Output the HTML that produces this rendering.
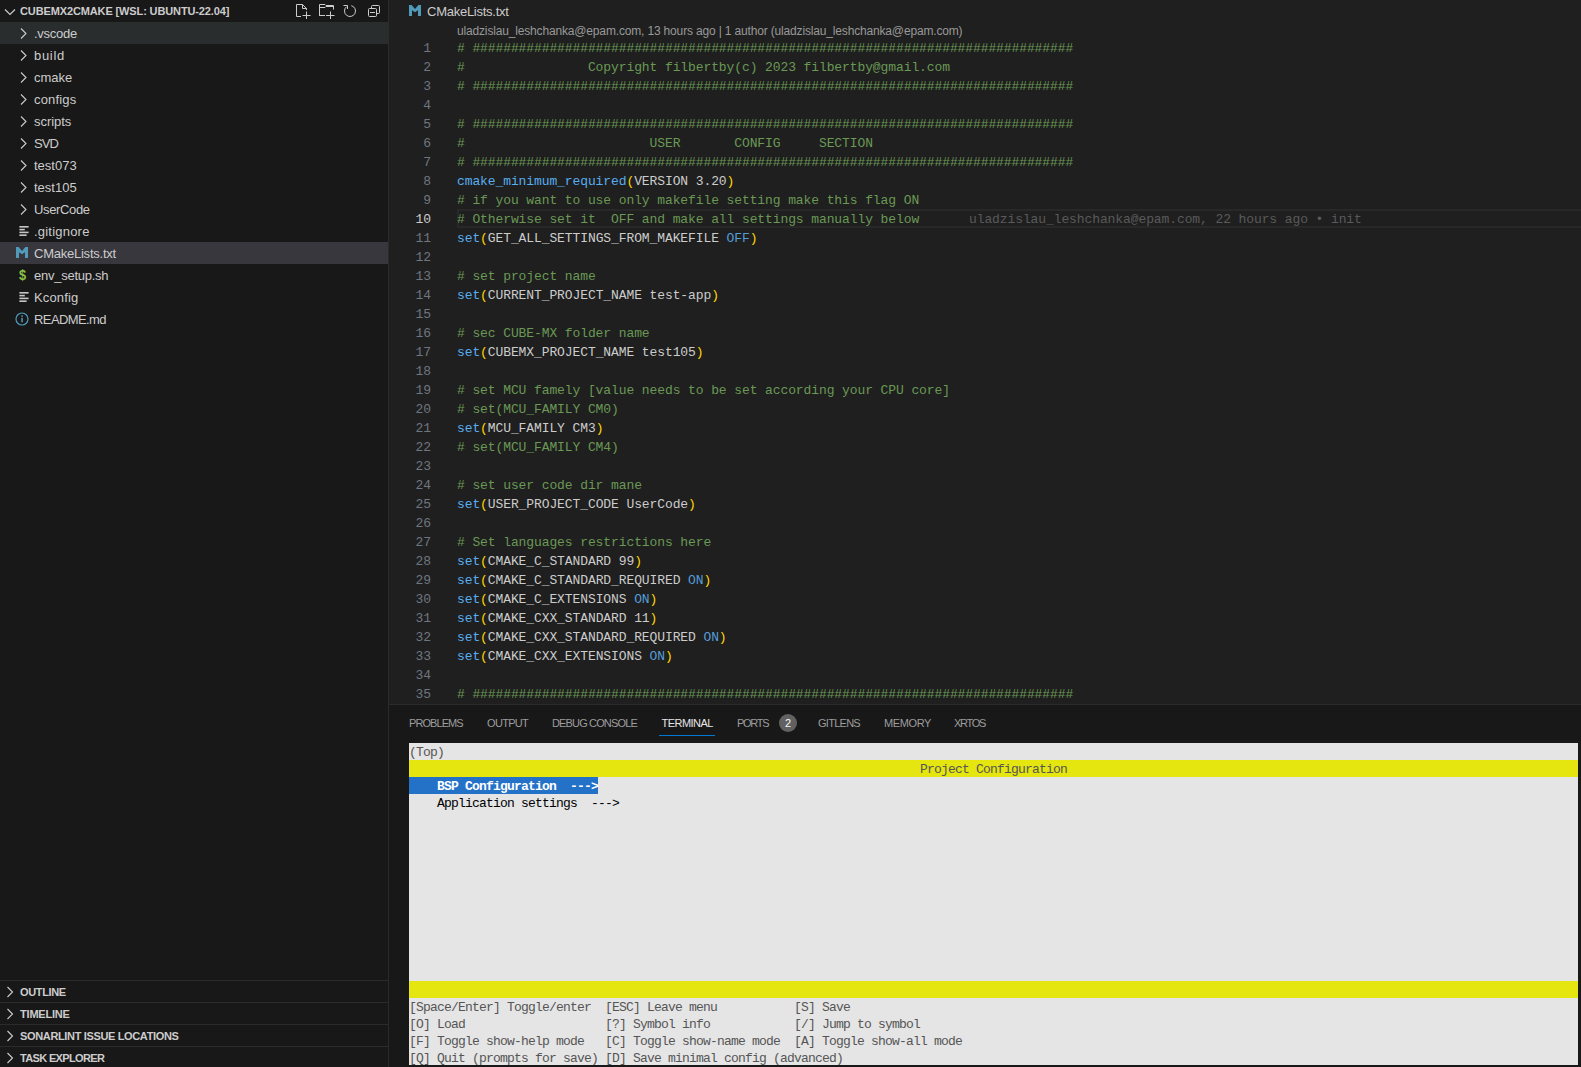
<!DOCTYPE html>
<html><head><meta charset="utf-8">
<style>
*{margin:0;padding:0;box-sizing:border-box}
html,body{width:1581px;height:1067px;overflow:hidden;background:#1f1f1f;font-family:"Liberation Sans",sans-serif;color:#cccccc}
.abs{position:absolute}
#side{position:absolute;left:0;top:0;width:388px;height:1067px;background:#181818}
#sideb{position:absolute;left:388px;top:0;width:1px;height:1067px;background:#2b2b2b}
.hdr{position:absolute;left:20px;top:0px;letter-spacing:-0.125px;height:22px;line-height:22px;font-size:11px;font-weight:bold;color:#cccccc;white-space:nowrap}
.row{position:absolute;left:0;width:388px;height:22px}
.row .t{position:absolute;left:34px;top:1px;line-height:22px;font-size:13px;color:#cccccc;white-space:nowrap}
.row svg{position:absolute}
.sec{position:absolute;left:0;width:388px;height:22px;border-top:1px solid #2b2b2b}
.sec .t{position:absolute;left:20px;top:1px;line-height:21px;font-size:11px;font-weight:bold;color:#cccccc;white-space:nowrap}
.sec svg{position:absolute;left:6px;top:3px}
/* editor */
.ln{position:absolute;left:390px;width:41px;text-align:right;height:19px;line-height:19px;font-family:"Liberation Mono",monospace;font-size:13px;letter-spacing:-0.1px;color:#6e7681;padding-top:1px;white-space:pre}
.ln.act{color:#cccccc}
.cl{position:absolute;left:457px;height:19px;line-height:19px;font-family:"Liberation Mono",monospace;font-size:13px;letter-spacing:-0.1px;color:#cccccc;white-space:pre;padding-top:1px}
.cm{color:#6a9955}
.f{color:#58aef0}
.k{color:#569cd6}
.p{color:#ffd700}
/* panel */
#panel{position:absolute;left:389px;top:704px;width:1192px;height:363px;background:#181818;border-top:1px solid #2b2b2b}
.tab{position:absolute;top:706px;height:35px;line-height:35px;font-size:11px;color:#9d9d9d;white-space:nowrap}
.tab.on{color:#e7e7e7}
#term{position:absolute;left:409px;top:743px;width:1169px;height:322px;background:#e5e5e5}
.tr{position:absolute;left:409px;height:17px;line-height:17px;padding-top:1px;font-family:"Liberation Mono",monospace;font-size:13px;letter-spacing:-0.8px;color:#000;white-space:pre}
</style></head><body>
<div id="side"></div>
<div id="sideb"></div>
<svg class="abs" style="left:3px;top:4px" width="14" height="14" viewBox="0 0 14 14"><path d="M2 5.5 L7 10.5 L12 5.5" fill="none" stroke="#cccccc" stroke-width="1.2"/></svg>
<div class="hdr">CUBEMX2CMAKE [WSL: UBUNTU-22.04]</div>
<svg class="abs" style="left:290px;top:0px" width="96" height="22" viewBox="0 0 96 22" fill="none" stroke="#cccccc" stroke-width="1">
 <path d="M6.5 16.5 V4.5 H12.5 L16.5 8.5 V10"/><path d="M6.5 16.5 H11"/><path d="M12.5 4.5 V8.5 H16.5"/><path d="M12.5 15.5 H20.5 M16.5 11.5 V19"/>
 <path d="M29.5 16 V4.5 H35 L36 5.5 H43.5 V9.5"/><path d="M29.5 7.5 H35 L36 6.5 H43.5"/><path d="M29.5 15.5 H35"/><path d="M36 15.5 H44.5 M40.5 11.5 V19"/>
 <path d="M61.33 5.66 A5.5 5.5 0 1 1 56.46 6.79"/><path d="M53.5 5.5 H57.5 V9"/>
 <path d="M81.5 8 V6.5 Q81.5 5.5 82.5 5.5 H88.5 Q89.5 5.5 89.5 6.5 V12.5 Q89.5 13.5 88.5 13.5 H86.5"/><rect x="78.5" y="8.5" width="8" height="8" rx="1"/><path d="M80 12.5 H85"/>
</svg>
<div class="row" style="top:22px;background:#2a2d2e;"><svg style="left:19px;top:5px" width="10" height="12" viewBox="0 0 10 12"><path d="M2 1.5 L7 6.5 L2 11.5" fill="none" stroke="#cccccc" stroke-width="1.1"/></svg><div class="t" style="letter-spacing:-0.25px">.vscode</div></div>
<div class="row" style="top:44px;"><svg style="left:19px;top:5px" width="10" height="12" viewBox="0 0 10 12"><path d="M2 1.5 L7 6.5 L2 11.5" fill="none" stroke="#cccccc" stroke-width="1.1"/></svg><div class="t" style="letter-spacing:0.7px">build</div></div>
<div class="row" style="top:66px;"><svg style="left:19px;top:5px" width="10" height="12" viewBox="0 0 10 12"><path d="M2 1.5 L7 6.5 L2 11.5" fill="none" stroke="#cccccc" stroke-width="1.1"/></svg><div class="t" style="letter-spacing:0px">cmake</div></div>
<div class="row" style="top:88px;"><svg style="left:19px;top:5px" width="10" height="12" viewBox="0 0 10 12"><path d="M2 1.5 L7 6.5 L2 11.5" fill="none" stroke="#cccccc" stroke-width="1.1"/></svg><div class="t" style="letter-spacing:0.17px">configs</div></div>
<div class="row" style="top:110px;"><svg style="left:19px;top:5px" width="10" height="12" viewBox="0 0 10 12"><path d="M2 1.5 L7 6.5 L2 11.5" fill="none" stroke="#cccccc" stroke-width="1.1"/></svg><div class="t" style="letter-spacing:-0.05px">scripts</div></div>
<div class="row" style="top:132px;"><svg style="left:19px;top:5px" width="10" height="12" viewBox="0 0 10 12"><path d="M2 1.5 L7 6.5 L2 11.5" fill="none" stroke="#cccccc" stroke-width="1.1"/></svg><div class="t" style="letter-spacing:-0.95px">SVD</div></div>
<div class="row" style="top:154px;"><svg style="left:19px;top:5px" width="10" height="12" viewBox="0 0 10 12"><path d="M2 1.5 L7 6.5 L2 11.5" fill="none" stroke="#cccccc" stroke-width="1.1"/></svg><div class="t" style="letter-spacing:0px">test073</div></div>
<div class="row" style="top:176px;"><svg style="left:19px;top:5px" width="10" height="12" viewBox="0 0 10 12"><path d="M2 1.5 L7 6.5 L2 11.5" fill="none" stroke="#cccccc" stroke-width="1.1"/></svg><div class="t" style="letter-spacing:0px">test105</div></div>
<div class="row" style="top:198px;"><svg style="left:19px;top:5px" width="10" height="12" viewBox="0 0 10 12"><path d="M2 1.5 L7 6.5 L2 11.5" fill="none" stroke="#cccccc" stroke-width="1.1"/></svg><div class="t" style="letter-spacing:-0.36px">UserCode</div></div>
<div class="row" style="top:220px;"><svg style="left:19px;top:6px" width="10" height="12" viewBox="0 0 10 12" fill="#c5c5c5"><rect x="0.4" y="0" width="9.2" height="1.6"/><rect x="0.4" y="2.8" width="5.4" height="1.6"/><rect x="0.4" y="5.6" width="9.2" height="1.6"/><rect x="0.4" y="8.4" width="7.2" height="1.6"/></svg><div class="t" style="letter-spacing:0.21px">.gitignore</div></div>
<div class="row" style="top:242px;background:#37373d;"><svg style="left:16px;top:5px" width="12" height="11" viewBox="0 0 12 11"><path d="M0 11 V0 H2.6 L6 4 L9.4 0 H12 V11 H9 V5.3 L6 7.2 L3 5.3 V11 Z" fill="#519aba"/></svg><div class="t" style="letter-spacing:-0.24px">CMakeLists.txt</div></div>
<div class="row" style="top:264px;"><div style="position:absolute;left:19px;top:0px;line-height:22px;font-size:15px;color:#8dc149;font-weight:bold;transform:scaleX(0.85);transform-origin:left">$</div><div class="t" style="letter-spacing:-0.25px">env_setup.sh</div></div>
<div class="row" style="top:286px;"><svg style="left:19px;top:6px" width="10" height="12" viewBox="0 0 10 12" fill="#c5c5c5"><rect x="0.4" y="0" width="9.2" height="1.6"/><rect x="0.4" y="2.8" width="5.4" height="1.6"/><rect x="0.4" y="5.6" width="9.2" height="1.6"/><rect x="0.4" y="8.4" width="7.2" height="1.6"/></svg><div class="t" style="letter-spacing:0.15px">Kconfig</div></div>
<div class="row" style="top:308px;"><svg style="left:15px;top:4px" width="14" height="14" viewBox="0 0 14 14"><circle cx="7" cy="7" r="6" fill="none" stroke="#519aba" stroke-width="1.2"/><rect x="6.3" y="5.8" width="1.5" height="4.5" fill="#519aba"/><rect x="6.3" y="3.3" width="1.5" height="1.5" fill="#519aba"/></svg><div class="t" style="letter-spacing:-0.59px">README.md</div></div>
<div class="sec" style="top:980px"><svg width="10" height="14" viewBox="0 0 10 14"><path d="M1.5 3 L6.5 8 L1.5 13" fill="none" stroke="#cccccc" stroke-width="1.1"/></svg><div class="t" style="letter-spacing:-0.35px">OUTLINE</div></div>
<div class="sec" style="top:1002px"><svg width="10" height="14" viewBox="0 0 10 14"><path d="M1.5 3 L6.5 8 L1.5 13" fill="none" stroke="#cccccc" stroke-width="1.1"/></svg><div class="t" style="letter-spacing:-0.2px">TIMELINE</div></div>
<div class="sec" style="top:1024px"><svg width="10" height="14" viewBox="0 0 10 14"><path d="M1.5 3 L6.5 8 L1.5 13" fill="none" stroke="#cccccc" stroke-width="1.1"/></svg><div class="t" style="letter-spacing:-0.35px">SONARLINT ISSUE LOCATIONS</div></div>
<div class="sec" style="top:1046px"><svg width="10" height="14" viewBox="0 0 10 14"><path d="M1.5 3 L6.5 8 L1.5 13" fill="none" stroke="#cccccc" stroke-width="1.1"/></svg><div class="t" style="letter-spacing:-0.65px">TASK EXPLORER</div></div><!-- editor title -->
<svg class="abs" style="left:409px;top:5px" width="12" height="11" viewBox="0 0 12 11"><path d="M0 11 V0 H2.6 L6 4 L9.4 0 H12 V11 H9 V5.3 L6 7.2 L3 5.3 V11 Z" fill="#519aba"/></svg>
<div class="abs" style="left:427px;top:1px;line-height:22px;font-size:13px;color:#cccccc;white-space:nowrap;letter-spacing:-0.26px">CMakeLists.txt</div>
<div class="abs" style="left:457px;top:22px;line-height:18px;font-size:12px;color:#999999;white-space:nowrap;letter-spacing:-0.163px">uladzislau_leshchanka@epam.com, 13 hours ago | 1 author (uladzislau_leshchanka@epam.com)</div>
<!-- current line box -->
<div class="abs" style="left:457px;top:209px;width:1124px;height:19px;border:2px solid #282828;border-right:none"></div>
<div class="cl" style="top:209px;left:969px;color:#5a5a5a">uladzislau_leshchanka@epam.com, 22 hours ago • init</div>
<div class="ln" style="top:38px">1</div>
<div class="cl cm" style="top:38px"># ##############################################################################</div>
<div class="ln" style="top:57px">2</div>
<div class="cl cm" style="top:57px">#                Copyright filbertby(c) 2023 filbertby@gmail.com</div>
<div class="ln" style="top:76px">3</div>
<div class="cl cm" style="top:76px"># ##############################################################################</div>
<div class="ln" style="top:95px">4</div>
<div class="ln" style="top:114px">5</div>
<div class="cl cm" style="top:114px"># ##############################################################################</div>
<div class="ln" style="top:133px">6</div>
<div class="cl cm" style="top:133px">#                        USER       CONFIG     SECTION</div>
<div class="ln" style="top:152px">7</div>
<div class="cl cm" style="top:152px"># ##############################################################################</div>
<div class="ln" style="top:171px">8</div>
<div class="cl" style="top:171px"><span class="f">cmake_minimum_required</span><span class="p">(</span>VERSION 3.20<span class="p">)</span></div>
<div class="ln" style="top:190px">9</div>
<div class="cl cm" style="top:190px"># if you want to use only makefile setting make this flag ON</div>
<div class="ln act" style="top:209px">10</div>
<div class="cl cm" style="top:209px"># Otherwise set it  OFF and make all settings manually below</div>
<div class="ln" style="top:228px">11</div>
<div class="cl" style="top:228px"><span class="f">set</span><span class="p">(</span>GET_ALL_SETTINGS_FROM_MAKEFILE <span class="k">OFF</span><span class="p">)</span></div>
<div class="ln" style="top:247px">12</div>
<div class="ln" style="top:266px">13</div>
<div class="cl cm" style="top:266px"># set project name</div>
<div class="ln" style="top:285px">14</div>
<div class="cl" style="top:285px"><span class="f">set</span><span class="p">(</span>CURRENT_PROJECT_NAME test-app<span class="p">)</span></div>
<div class="ln" style="top:304px">15</div>
<div class="ln" style="top:323px">16</div>
<div class="cl cm" style="top:323px"># sec CUBE-MX folder name</div>
<div class="ln" style="top:342px">17</div>
<div class="cl" style="top:342px"><span class="f">set</span><span class="p">(</span>CUBEMX_PROJECT_NAME test105<span class="p">)</span></div>
<div class="ln" style="top:361px">18</div>
<div class="ln" style="top:380px">19</div>
<div class="cl cm" style="top:380px"># set MCU famely [value needs to be set according your CPU core]</div>
<div class="ln" style="top:399px">20</div>
<div class="cl cm" style="top:399px"># set(MCU_FAMILY CM0)</div>
<div class="ln" style="top:418px">21</div>
<div class="cl" style="top:418px"><span class="f">set</span><span class="p">(</span>MCU_FAMILY CM3<span class="p">)</span></div>
<div class="ln" style="top:437px">22</div>
<div class="cl cm" style="top:437px"># set(MCU_FAMILY CM4)</div>
<div class="ln" style="top:456px">23</div>
<div class="ln" style="top:475px">24</div>
<div class="cl cm" style="top:475px"># set user code dir mane</div>
<div class="ln" style="top:494px">25</div>
<div class="cl" style="top:494px"><span class="f">set</span><span class="p">(</span>USER_PROJECT_CODE UserCode<span class="p">)</span></div>
<div class="ln" style="top:513px">26</div>
<div class="ln" style="top:532px">27</div>
<div class="cl cm" style="top:532px"># Set languages restrictions here</div>
<div class="ln" style="top:551px">28</div>
<div class="cl" style="top:551px"><span class="f">set</span><span class="p">(</span>CMAKE_C_STANDARD 99<span class="p">)</span></div>
<div class="ln" style="top:570px">29</div>
<div class="cl" style="top:570px"><span class="f">set</span><span class="p">(</span>CMAKE_C_STANDARD_REQUIRED <span class="k">ON</span><span class="p">)</span></div>
<div class="ln" style="top:589px">30</div>
<div class="cl" style="top:589px"><span class="f">set</span><span class="p">(</span>CMAKE_C_EXTENSIONS <span class="k">ON</span><span class="p">)</span></div>
<div class="ln" style="top:608px">31</div>
<div class="cl" style="top:608px"><span class="f">set</span><span class="p">(</span>CMAKE_CXX_STANDARD 11<span class="p">)</span></div>
<div class="ln" style="top:627px">32</div>
<div class="cl" style="top:627px"><span class="f">set</span><span class="p">(</span>CMAKE_CXX_STANDARD_REQUIRED <span class="k">ON</span><span class="p">)</span></div>
<div class="ln" style="top:646px">33</div>
<div class="cl" style="top:646px"><span class="f">set</span><span class="p">(</span>CMAKE_CXX_EXTENSIONS <span class="k">ON</span><span class="p">)</span></div>
<div class="ln" style="top:665px">34</div>
<div class="ln" style="top:684px">35</div>
<div class="cl cm" style="top:684px"># ##############################################################################</div><div id="panel"></div>
<div class="tab" style="left:409px;letter-spacing:-0.93px">PROBLEMS</div>
<div class="tab" style="left:487px;letter-spacing:-0.68px">OUTPUT</div>
<div class="tab" style="left:552px;letter-spacing:-0.85px">DEBUG CONSOLE</div>
<div class="tab on" style="left:661.5px;letter-spacing:-0.54px">TERMINAL</div>
<div class="tab" style="left:737px;letter-spacing:-1.27px">PORTS</div>
<div class="tab" style="left:818px;letter-spacing:-0.73px">GITLENS</div>
<div class="tab" style="left:884px;letter-spacing:-0.38px">MEMORY</div>
<div class="tab" style="left:954px;letter-spacing:-1.27px">XRTOS</div>
<div class="abs" style="left:659px;top:735px;width:56px;height:1px;background:#0078d4"></div>
<div class="abs" style="left:779px;top:714px;width:18px;height:18px;border-radius:9px;background:#616161;color:#f8f8f8;font-size:11px;line-height:18px;text-align:center">2</div>
<div id="term"></div>
<div class="abs" style="left:409px;top:760px;width:1169px;height:17px;background:#e5e510"></div>
<div class="abs" style="left:409px;top:777px;width:189px;height:17px;background:#2472c8"></div>
<div class="abs" style="left:409px;top:981px;width:1169px;height:17px;background:#e5e510"></div>
<div class="tr" style="top:743px;color:#555555">(Top)</div>
<div class="tr" style="top:760px;color:#555555">                                                                         Project Configuration</div>
<div class="tr" style="top:777px;color:#ffffff;font-weight:bold">    BSP Configuration  ---&gt;</div>
<div class="tr" style="top:794px;">    Application settings  ---&gt;</div>
<div class="tr" style="top:998px;color:#555555">[Space/Enter] Toggle/enter  [ESC] Leave menu           [S] Save</div>
<div class="tr" style="top:1015px;color:#555555">[O] Load                    [?] Symbol info            [/] Jump to symbol</div>
<div class="tr" style="top:1032px;color:#555555">[F] Toggle show-help mode   [C] Toggle show-name mode  [A] Toggle show-all mode</div>
<div class="tr" style="top:1049px;color:#555555">[Q] Quit (prompts for save) [D] Save minimal config (advanced)</div></body></html>
